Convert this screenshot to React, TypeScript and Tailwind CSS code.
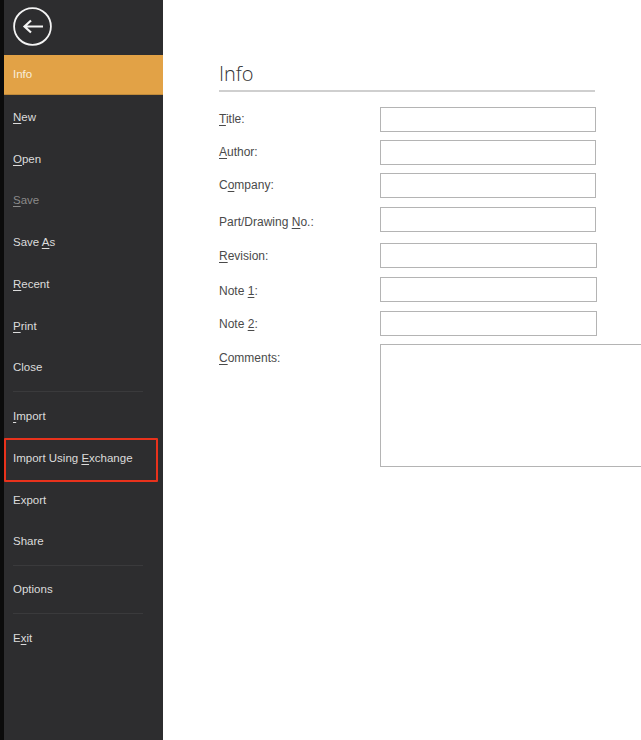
const menuTop = [
    { before: "", key: "N", after: "ew" },
    { before: "", key: "O", after: "pen" },
    { before: "", key: "S", after: "ave", disabled: true },
    { before: "Save ", key: "A", after: "s" },
    { before: "", key: "R", after: "ecent" },
    { before: "", key: "P", after: "rint" },
    { before: "Close", key: "", after: "" },
];

const fields = [
    { before: "", key: "T", after: "itle:", row: "mt-[15px] w-[377px]", label: "pb-[1px]" },
    { before: "", key: "A", after: "uthor:", row: "mt-[8px] w-[377px]", label: "pb-[1px]" },
    { before: "C", key: "o", after: "mpany:", row: "mt-[8px] w-[377px]", label: "pb-[1px]" },
    { before: "Part/Drawing ", key: "N", after: "o.:", row: "mt-[9px] w-[377px]", label: "pt-[5px]" },
    { before: "", key: "R", after: "evision:", row: "mt-[11px] w-[378px]", label: "pt-[1px]" },
    { before: "Note ", key: "1", after: ":", row: "mt-[9px] w-[378px]", label: "pt-[2px]" },
    { before: "Note ", key: "2", after: ":", row: "mt-[9px] w-[378px]", label: "pt-[1px]" },
];

function Mnemonic({ before, k, after }: { before: string; k: string; after: string }) {
    return (
        <span>
            {before}
            <span className="underline underline-offset-2">{k}</span>
            {after}
        </span>
    );
}

function MenuItem({ before, k, after, disabled }: { before: string; k: string; after: string; disabled?: boolean }) {
    return (
        <div className={`flex h-[41.75px] items-center pl-[9px] pt-[1px] ${disabled ? "text-[#8a8a8a]" : "text-[#dcdcdc]"}`}>
            <Mnemonic before={before} k={k} after={after} />
        </div>
    );
}

function Separator() {
    return <div className="ml-[9px] h-px w-[130px] bg-[#3a3a3c]" />;
}

export default function App() {
    return (
        <div className="flex h-[740px] w-[641px] overflow-hidden bg-white font-['Liberation_Sans',sans-serif] text-[12px]">
            <div className="h-full w-[4px] shrink-0 bg-[#0b0b0b]" />
            <div className="h-full w-[159px] shrink-0 bg-[#2d2d2f] text-[11.5px]">
                <div className="flex h-[55px] items-start pl-[9px] pt-[7px]">
                    <svg width="39" height="39" viewBox="0 0 39 39" fill="none" stroke="#f4f4f4">
                        <circle cx="19.5" cy="19.5" r="18.4" strokeWidth="1.8" />
                        <path d="M11.5 19.5H30M18 13.5l-6.5 6 6.5 6" strokeWidth="2.2" />
                    </svg>
                </div>
                <div className="flex h-[40px] items-center border-b border-[#c08a3a] bg-[#e2a246] pl-[9px] pt-[1px] text-[#f8eedd]">
                    Info
                </div>
                <div className="pt-[1px]">
                    {menuTop.map((m) => (
                        <MenuItem key={m.before + m.key + m.after} before={m.before} k={m.key} after={m.after} disabled={m.disabled} />
                    ))}
                </div>
                <div className="mt-[3px]">
                    <Separator />
                </div>
                <div className="pt-[3px]">
                    <MenuItem before="" k="I" after="mport" />
                    <div className="relative">
                        <MenuItem before="Import Using " k="E" after="xchange" />
                        <div className="absolute top-[1px] left-0 h-[44px] w-[154px] rounded-[1px] border-[2.5px] border-[#e8321c]" />
                    </div>
                    <MenuItem before="Export" k="" after="" />
                    <MenuItem before="Share" k="" after="" />
                </div>
                <div className="mt-[3px]">
                    <Separator />
                </div>
                <div className="flex h-[47px] items-center pl-[9px] text-[#dcdcdc]">Options</div>
                <Separator />
                <div className="flex h-[47px] items-center pl-[9px] pt-[1px] text-[#dcdcdc]">
                    <Mnemonic before="E" k="x" after="it" />
                </div>
            </div>
            <div className="min-w-0 flex-1 pl-[56px] pt-[60px] text-[#4a4a4a]">
                <div className="w-[376px] border-b-2 border-[#cfcfcf] pb-[2px] font-['Open_Sans',sans-serif] text-[20px] leading-[28px] font-light text-[#333333]">
                    Info
                </div>
                {fields.map((f) => (
                    <div key={f.before + f.key + f.after} className={`flex items-center ${f.row}`}>
                        <div className={`w-[161px] shrink-0 ${f.label}`}>
                            <Mnemonic before={f.before} k={f.key} after={f.after} />
                        </div>
                        <div className="h-[25px] flex-1 border border-[#b4b4b4] bg-white" />
                    </div>
                ))}
                <div className="mt-[8px] flex">
                    <div className="w-[161px] shrink-0 pt-[5px]">
                        <Mnemonic before="" k="C" after="omments:" />
                    </div>
                    <div className="h-[123px] w-[300px] shrink-0 border border-[#b4b4b4] bg-white" />
                </div>
            </div>
        </div>
    );
}
